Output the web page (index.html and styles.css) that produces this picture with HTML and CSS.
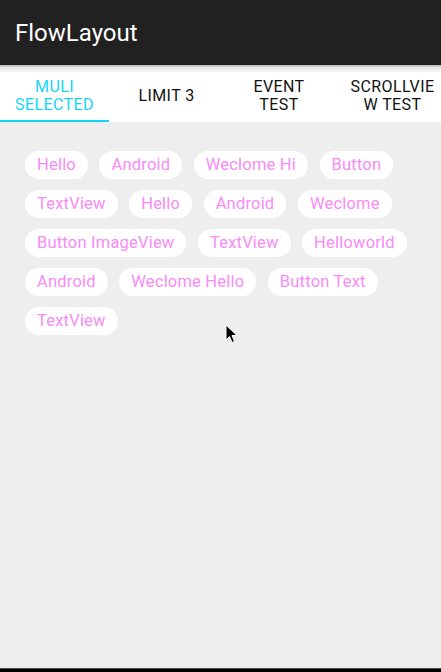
FILE: index.html
```html
<!DOCTYPE html>
<html>
<head>
<meta charset="utf-8">
<link rel="stylesheet" href="styles.css">
</head>
<body>
<div class="screen">
  <header class="appbar"><span class="title">FlowLayout</span></header>
  <div class="shadow"></div>
  <nav class="tabs">
    <div class="tab tab-1 active"><span>MULI<br>SELECTED</span></div>
    <div class="tab tab-2"><span>LIMIT 3</span></div>
    <div class="tab tab-3"><span>EVENT<br>TEST</span></div>
    <div class="tab tab-4"><span>SCROLLVIE<br>W TEST</span></div>
  </nav>
  <main class="content">
    <div class="flow">
      <span class="chip">Hello</span>
      <span class="chip">Android</span>
      <span class="chip">Weclome Hi</span>
      <span class="chip">Button</span>
      <span class="chip">TextView</span>
      <span class="chip">Hello</span>
      <span class="chip">Android</span>
      <span class="chip">Weclome</span>
      <span class="chip">Button ImageView</span>
      <span class="chip">TextView</span>
      <span class="chip">Helloworld</span>
      <span class="chip">Android</span>
      <span class="chip">Weclome Hello</span>
      <span class="chip">Button Text</span>
      <span class="chip">TextView</span>
    </div>
    <svg class="cursor" width="13" height="20" viewBox="0 0 13 20">
      <path d="M1 1 L1 16 L4.5 12.5 L7 18.5 L9.5 17.5 L7 11.5 L12 11.5 Z" fill="#000" stroke="#fff" stroke-width="1"/>
    </svg>
  </main>
  <div class="navbar"></div>
</div>
</body>
</html>
```

FILE: styles.css
```css
* { box-sizing: border-box; }
html, body { margin: 0; padding: 0; }
body {
  width: 441px;
  height: 672px;
  overflow: hidden;
  font-family: Roboto, "Liberation Sans", sans-serif;
  background: #eeeeee;
}
.screen {
  display: flex;
  flex-direction: column;
  height: 672px;
}
.appbar {
  height: 65px;
  background: #212121;
  padding: 2px 0 0 15px;
  display: flex;
}
.title {
  color: #ffffff;
  font-size: 24px;
  line-height: 63px;
}
.shadow {
  height: 7px;
  background: linear-gradient(#b4b4b4, #e8e8e8 40%, #f3f3f3);
}
.tabs {
  height: 50px;
  background: #ffffff;
  display: flex;
  overflow: hidden;
}
.tab {
  flex: 0 0 auto;
  display: flex;
  align-items: center;
  justify-content: center;
  text-align: center;
  font-size: 16px;
  line-height: 18.5px;
  letter-spacing: 0.4px;
  color: #111111;
  border-bottom: 2px solid transparent;
}
.tab-1 { width: 109px; }
.tab-2 { width: 115px; }
.tab-3 { width: 110px; }
.tab-4 { flex: 1 1 auto; padding-left: 10px; }
.tab.active {
  color: #12d6f8;
  border-bottom-color: #12d6f8;
}
.content {
  flex: 1;
  position: relative;
  padding: 29px 25px 0 25px;
}
.flow {
  display: flex;
  flex-wrap: wrap;
  column-gap: 11.5px;
  row-gap: 11px;
}
.chip {
  background: #ffffff;
  color: #f98af9;
  font-size: 16.5px;
  line-height: 20px;
  letter-spacing: 0.2px;
  padding: 4px 12px;
  height: 28px;
  border-radius: 14px;
  white-space: nowrap;
}
.cursor {
  position: absolute;
  left: 225px;
  top: 202px;
}
.navbar {
  height: 4px;
  background: #000;
  border-top: 1px solid #4a4a4a;
}
```
